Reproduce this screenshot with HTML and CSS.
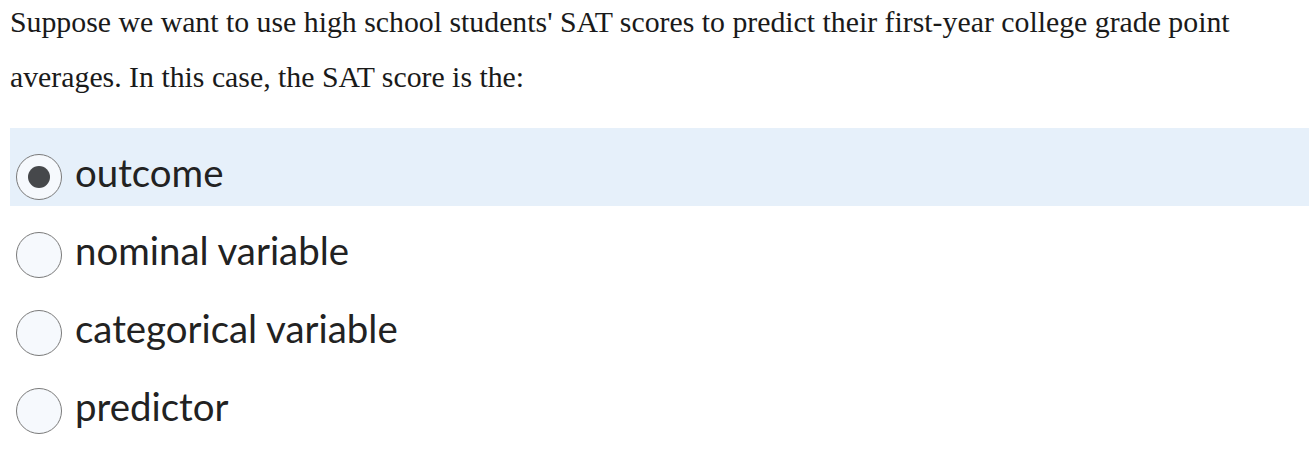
FILE: index.html
```html
<!DOCTYPE html>
<html>
<head>
<meta charset="utf-8">
<link rel="stylesheet" href="styles.css">
</head>
<body>
<div class="quiz">
  <p class="question">Suppose we want to use high school students' SAT scores to predict their first-year college grade point averages. In this case, the SAT score is the:</p>
  <div class="answers">
    <label class="answer selected"><span class="radio checked"></span><span class="text">outcome</span></label>
    <label class="answer"><span class="radio"></span><span class="text">nominal variable</span></label>
    <label class="answer"><span class="radio"></span><span class="text">categorical variable</span></label>
    <label class="answer"><span class="radio"></span><span class="text">predictor</span></label>
  </div>
</div>
</body>
</html>
```
FILE: styles.css
```css
html, body { margin: 0; padding: 0; background: #fff; }
.quiz { padding: 0 3px 0 10px; width: 1299px; }
.question {
  margin: -6px 0 0 0;
  font-family: "Liberation Serif", "Times New Roman", serif;
  font-size: 29.8px;
  line-height: 55px;
  color: #1a1a1a;
  width: 1290px;
}
.answers { margin-top: 24px; display: flex; flex-direction: column; }
.answer {
  display: flex;
  align-items: center;
  height: 78px;
  box-sizing: border-box;
  padding-top: 19px;
  font-family: Lato, "Open Sans", sans-serif;
  font-size: 38.4px;
  color: #222;
}
.answer.selected { background: #e6f0fa; }
.radio {
  width: 44px; height: 44px;
  border: 1px solid #7a7a7a;
  border-radius: 50%;
  background: #f6f9fd;
  margin-left: 6px;
  margin-right: 13px;
  display: flex; align-items: center; justify-content: center;
  flex: none;
}
.radio.checked::after {
  content: "";
  width: 22px; height: 22px;
  border-radius: 50%;
  background: #46484b;
}
.text { line-height: 46px; margin-bottom: 10px; }
```
